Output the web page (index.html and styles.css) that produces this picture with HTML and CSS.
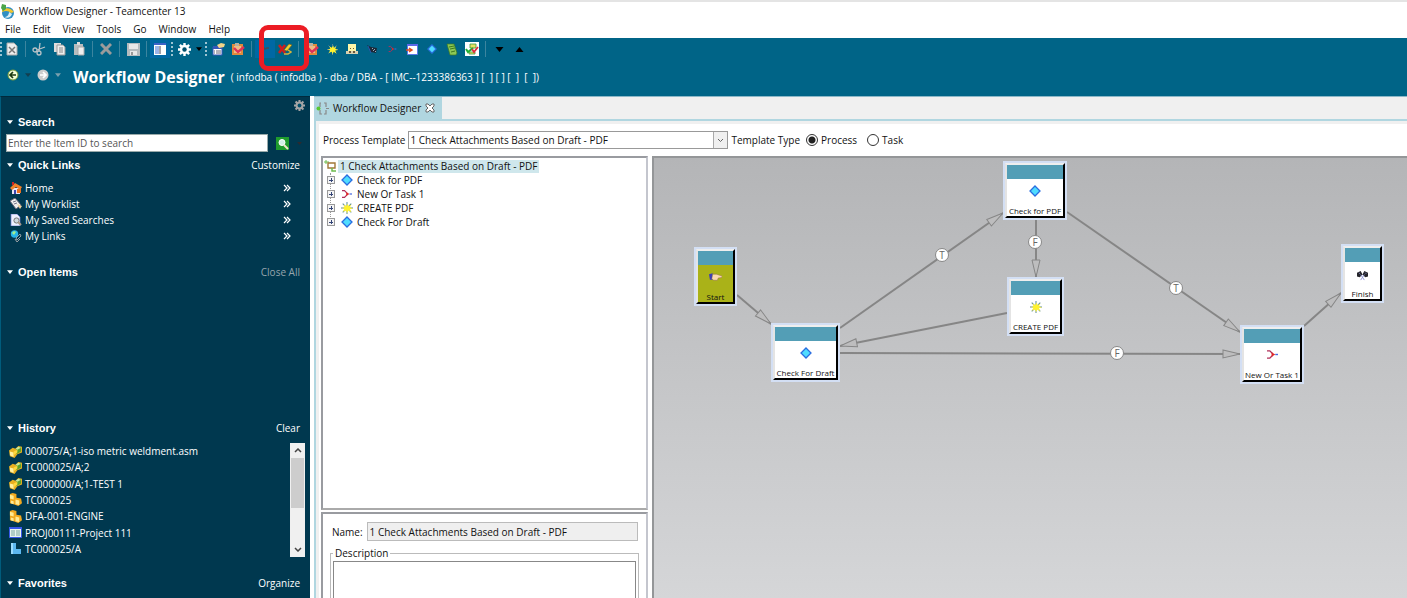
FILE: index.html
```html
<!DOCTYPE html>
<html lang="en">
<head>
  <meta charset="UTF-8" />
  <meta name="viewport" content="width=device-width, initial-scale=1" />
  <title>Workflow Designer - Teamcenter 13</title>
  <link rel="stylesheet" href="styles.css">
</head>
<body>

  <!-- shared icons -->
  <svg class="sprite" aria-hidden="true">
    <symbol id="i-diamond" viewBox="0 0 12 12"><path d="M6 1l5 5-5 5-5-5z" fill="#4fdcff" stroke="#2a6de0" stroke-width="1.3"/></symbol>
    <symbol id="i-or" viewBox="0 0 14 12"><path d="M1 2h3l3 3M1 10h3l3-3" fill="none" stroke="#b0305a" stroke-width="1.5"/><path d="M6 3.5l4 2.5-4 2.5z" fill="#e02828"/><path d="M10 6h3" stroke="#4a6ae0" stroke-width="1.5"/></symbol>
    <symbol id="i-star" viewBox="0 0 14 14"><path d="M7 0v14M0 7h14M2 2l10 10M12 2L2 12" stroke="#5a8a9a" stroke-width="1.200"/><path d="M8 2l.8 3L12 3l-1.500 3.200L14 7.500l-3.500.8L12 12 8.500 10 7 13l-1-3-4 1.500 2-3.300L1 7l3.200-1L3 3l3 1.800z" fill="#fff22e"/></symbol>
    <symbol id="i-caret" viewBox="0 0 8 5"><path d="M0 0h8L4 5z"/></symbol>
    <symbol id="i-gear" viewBox="0 0 14 14"><path d="M7 0v14M0 7h14M2 2l10 10M12 2L2 12" stroke="currentColor" stroke-width="2.600"/><circle cx="7" cy="7" r="5" fill="currentColor"/><circle class="hole" cx="7" cy="7" r="2.400"/></symbol>
    <symbol id="i-part" viewBox="0 0 14 14"><path d="M0 6l4-3 3 1 3-3 4 1v6l-5 2-3 4-5-2z" fill="#e8b020"/><path d="M1 7l4 1v5l-4-2z" fill="#fff0a0"/><path d="M8 4l5-2v5l-5 3z" fill="#5aa02c"/><path d="M5 7l4-2v3l-4 3z" fill="#ffd83c"/><path d="M7 4l3-2 3 1-4 2z" fill="#c8e89a"/></symbol>
    <symbol id="i-item" viewBox="0 0 14 14"><path d="M1 1l3-1 4 1v4l5 1 1 5-4 3-5-2-4-1z" fill="#f2a91e"/><path d="M1 2l4 1v4L1 6zM2 8l3 1v3l-3-1zM7 7l4 1v5l-4-1z" fill="#ffeb94"/></symbol>
    <symbol id="i-clip" viewBox="0 0 14 14"><path d="M1 2h11v11H1z" fill="#e08a3c"/><path d="M3 4h7v7H3z" fill="#f0bc84"/><path d="M4 1h4v3H4z" fill="#b8b0a0"/><path d="M3 6l4 4 6-5" fill="none" stroke="#e0305a" stroke-width="2.400"/></symbol>
    <symbol id="i-flags" viewBox="0 0 14 12"><path d="M1 3l4-2 2 4-3 3-3-1zM13 3L9 1 7 5l3 3 3-1z" fill="#25252b"/><path d="M3 3l1 1M10 3l1 1M5 5l4 6M9 5l-4 6" stroke="#8d95d8"/></symbol>
    <symbol id="i-hand" viewBox="0 0 14 8"><path d="M0 1l4-1v7H1z" fill="#3c3cb8"/><path d="M4 1h4l6 2v1.500l-4 .5-1 2.500H5L3 6z" fill="#fbd9ae" stroke="#8a6648" stroke-width=".5"/></symbol>
  </svg>

  <div class="app">
    <div class="strip"></div>
    <header class="titlebar">
      <svg class="logo" width="15" height="15" viewBox="0 0 15 15"><circle cx="8" cy="9" r="6" fill="#2f8fc4"/><path d="M2 6c4-3 9-2 12 2l-3 1C9 7 6 6 2 8z" fill="#f3c62c"/><path d="M4 13c3 0 5-2 5-5l3 2c-1 3-4 5-8 3z" fill="#d8ecf4"/><path d="M2 0l4 1v4l-3 2-2-3z" fill="#4aa548"/></svg>
      <span>Workflow Designer - Teamcenter 13</span>
    </header>
    <nav class="menubar">
      <button>File</button><button>Edit</button><button>View</button><button>Tools</button><button>Go</button><button>Window</button><button>Help</button>
    </nav>

    <div class="toolbar" role="toolbar">
      <span class="grip"></span>
      <button class="tool" aria-label="Close"><svg width="12" height="14" viewBox="0 0 12 14"><path d="M1 1h7l3 3v9H1z" fill="#eee" stroke="#aaa"/><path d="M3 5l6 6M9 5l-6 6" stroke="#777" stroke-width="1.500"/></svg></button>
      <span class="sep"></span>
      <button class="tool" aria-label="Cut"><svg width="14" height="14" viewBox="0 0 14 14" fill="none" stroke="#b9c3c8" stroke-width="1.300"><path d="M8 1L7 9M13 5L5 8"/><circle cx="3" cy="8" r="2"/><circle cx="7" cy="11" r="2"/></svg></button>
      <button class="tool" aria-label="Copy"><svg width="13" height="14" viewBox="0 0 13 14"><path d="M1 1h7v9H1z" fill="#ddd"/><path d="M4 3h6l2 2v8H4z" fill="#eee" stroke="#999"/><path d="M6 6h4M6 8h4M6 10h4" stroke="#888"/></svg></button>
      <button class="tool" aria-label="Paste"><svg width="13" height="14" viewBox="0 0 13 14"><path d="M1 2h9v11H1z" fill="#b8bcbe"/><path d="M4 0h3v3H4z" fill="#ddd"/><path d="M5 5h6v8H5z" fill="#eee" stroke="#aaa"/></svg></button>
      <span class="sep"></span>
      <button class="tool" aria-label="Delete"><svg width="12" height="12" viewBox="0 0 12 12"><path d="M1 1l10 10M11 1L1 11" stroke="#9b9b9b" stroke-width="3"/></svg></button>
      <span class="sep"></span>
      <button class="tool" aria-label="Save"><svg width="13" height="13" viewBox="0 0 13 13"><path d="M0 0h13v13H0z" fill="#b5bbbe"/><path d="M2 1h9v5H2zM3 8h7v4H3z" fill="#e8e8e8"/><path d="M4 9h2v3H4z" fill="#999"/></svg></button>
      <span class="sep"></span>
      <button class="tool active" aria-label="Navigation pane"><svg width="12" height="12" viewBox="0 0 12 12"><path d="M0 0h12v12H0z" fill="#fff"/><path d="M0 0h12v2H0z" fill="#3c62c8"/><path d="M1 3h4v8H1z" fill="#9db4e8"/><path d="M6 3v8" stroke="#445"/></svg></button>
      <span class="grip"></span>
      <button class="tool white" aria-label="Options"><svg width="13" height="13"><use href="#i-gear"/></svg></button>
      <button class="drop" aria-label="More options"><svg width="6" height="4"><use href="#i-caret"/></svg></button>
      <span class="grip"></span>
      <button class="tool" aria-label="Properties"><svg width="13" height="14" viewBox="0 0 13 14"><path d="M1 5h9v8H1z" fill="#fff" stroke="#3757b8"/><path d="M1 4h9v3H1z" fill="#3757b8"/><path d="M2 9h1M4 9h5M2 11h1M4 11h5" stroke="#667"/><path d="M5 3l4-2 4 1-1 3-5 1z" fill="#f4d488"/></svg></button>
      <button class="tool" aria-label="Assign"><svg width="14" height="14"><use href="#i-clip"/></svg></button>
      <span class="sep"></span>
      <button class="tool active" aria-label="Browse mode"><svg width="10" height="6" viewBox="0 0 10 6"><path d="M1 2h3l1 1 2-1h2M3 4h1" fill="none" stroke="#3d4c5c" stroke-width="1.500"/></svg></button>
      <button class="tool" aria-label="Edit mode"><svg width="14" height="12" viewBox="0 0 14 12"><path d="M1 2l6 8M7 2l-6 8" stroke="#d01c1c" stroke-width="2.500"/><path d="M6 7l5-6 3 1-5 6z" fill="#f0d030" stroke="#7c5a18" stroke-width=".6"/><path d="M6 11h4l3-2-3-2" fill="none" stroke="#d9b53a" stroke-width="1.500"/></svg></button>
      <span class="sep"></span>
      <button class="tool" aria-label="Do task"><svg width="14" height="14"><use href="#i-clip"/></svg></button>
      <button class="tool" aria-label="Generic task"><svg width="11" height="11"><use href="#i-star"/></svg></button>
      <button class="tool" aria-label="Review task"><svg width="12" height="12" viewBox="0 0 12 12"><path d="M2 1h8v7H2z" fill="#fff6a8"/><path d="M0 8h12v3H0z" fill="#d8d0b0"/><path d="M4 5h1v1H4zM7 5h1v1H7zM3 8h2v2H3zM7 8h2v2H7z" fill="#6a5a3a"/></svg></button>
      <button class="tool" aria-label="Route task"><svg width="10" height="9" viewBox="0 0 10 9"><path d="M0 0l4 2 6 1-1 5-5-1z" fill="#1d2836"/><path d="M5 3h1v1H5zM7 4h1v1H7zM6 5h1v1H6zM8 6h1v1H8z" fill="#9ab"/><path d="M1 1l3 7" stroke="#2a55b0"/></svg></button>
      <button class="tool" aria-label="Or task"><svg width="9" height="8"><use href="#i-or"/></svg></button>
      <button class="tool" aria-label="Acknowledge task"><svg width="12" height="11" viewBox="0 0 12 11"><path d="M1.500.5h10v10h-10z" fill="#fff" stroke="#5c78e8"/><path d="M1 0h11v2H1z" fill="#5c68e8"/><path d="M0 6h5M3 4l3 2-3 2" stroke="#d84a20" fill="none" stroke-width="1.500"/></svg></button>
      <button class="tool" aria-label="Condition task"><svg width="10" height="10"><use href="#i-diamond"/></svg></button>
      <button class="tool" aria-label="Checklist"><svg width="12" height="13" viewBox="0 0 12 13"><path d="M1 1l7 0 3 9-1 2-6 0z" fill="#8cc856" stroke="#3f7a1e" stroke-width=".7"/><path d="M3 4l5-1M4 6l5-1M5 9l4-1" stroke="#3f7a1e"/></svg></button>
      <button class="tool" aria-label="Validate task"><svg width="14" height="14" viewBox="0 0 14 14"><path d="M0 0h14v14H0z" fill="#fff"/><path d="M5 2h6v4H5zM4 10h6v2H4z" fill="#e8e060" stroke="#3a9a42" stroke-width=".8"/><path d="M1 7l2 3 5-4" fill="none" stroke="#22b034" stroke-width="2"/><path d="M7 7l2 3 4-5" fill="none" stroke="#e02c3c" stroke-width="1.800"/></svg></button>
      <span class="sep"></span>
      <button class="tool" aria-label="Move down"><svg width="9" height="5"><use href="#i-caret"/></svg></button>
      <button class="tool flip" aria-label="Move up"><svg width="9" height="5"><use href="#i-caret"/></svg></button>
    </div>

    <div class="banner">
      <button class="nav-btn" aria-label="Back"><svg width="12" height="12" viewBox="0 0 12 12"><circle cx="6" cy="6" r="5" fill="#f4ffd8" stroke="#7a9a3a"/><path d="M9 6H4M6 3L3 6l3 3" fill="none" stroke="#1d3a10" stroke-width="1.700"/></svg></button>
      <svg class="dim" width="6" height="4"><use href="#i-caret"/></svg>
      <button class="nav-btn" aria-label="Forward"><svg width="12" height="12" viewBox="0 0 12 12"><circle cx="6" cy="6" r="5.500" fill="#ccc"/><path d="M3 6h5M6 3l3 3-3 3" fill="none" stroke="#fff" stroke-width="1.700"/></svg></button>
      <svg class="dim light" width="6" height="4"><use href="#i-caret"/></svg>
      <h1>Workflow Designer</h1>
      <span class="session">( infodba ( infodba ) - dba / DBA - [ IMC--1233386363 ] [&nbsp; ] [ ] [&nbsp; ]&nbsp; [&nbsp; ])</span>
    </div>

    <div class="workspace">
      <aside class="sidebar">
        <div class="side-top"><button aria-label="Panel settings"><svg width="11" height="11"><use href="#i-gear"/></svg></button></div>

        <section class="search">
          <h2><svg width="6" height="4"><use href="#i-caret"/></svg>Search</h2>
          <div class="search-row">
            <input type="text" placeholder="Enter the Item ID to search" aria-label="Search">
            <button aria-label="Run search"><svg width="13" height="13" viewBox="0 0 13 13"><path d="M0 0h13v13H0z" fill="#1f9c2d"/><circle cx="6" cy="5.500" r="3" fill="#d2f0e6" stroke="#fff"/><path d="M8 8l4 4" stroke="#f2e6c8" stroke-width="2"/></svg></button>
            <svg class="search-caret" width="5" height="3"><use href="#i-caret"/></svg>
          </div>
        </section>

        <section class="quick">
          <h2><svg width="6" height="4"><use href="#i-caret"/></svg>Quick Links <a href="#">Customize</a></h2>
          <ul>
            <li><svg width="12" height="12" viewBox="0 0 12 12"><path d="M2 6h8v6H2z" fill="#e8e4f4"/><path d="M0 6l5-5 7 4-2 3-4-3-4 3z" fill="#f0802a"/><path d="M2 0h2v3H2z" fill="#c22"/><path d="M4 8h2v4H4z" fill="#3a46b0"/><path d="M7 7h4v4H7z" fill="#e87020"/></svg><a href="#">Home</a><svg class="more" width="8" height="8"><use href="#i-more"/></svg></li>
            <li><svg width="12" height="12" viewBox="0 0 12 12"><path d="M0 3l5-3 6 7-5 4z" fill="#eee" stroke="#667"/><path d="M3 4l3-1M4 6l3-1" stroke="#778"/><path d="M7 6l5 2-2 3z" fill="#f2d2a0"/></svg><a href="#">My Worklist</a><svg class="more" width="8" height="8"><use href="#i-more"/></svg></li>
            <li><svg width="12" height="12" viewBox="0 0 12 12"><path d="M1 0h6l3 3v9H1z" fill="#eef0ff" stroke="#6a78d0" stroke-width=".7"/><circle cx="6.500" cy="6.500" r="2.600" fill="#cfd8e0" stroke="#777"/><path d="M8 8l3 3" stroke="#a98" stroke-width="2"/></svg><a href="#">My Saved Searches</a><svg class="more" width="8" height="8"><use href="#i-more"/></svg></li>
            <li><svg width="12" height="12" viewBox="0 0 12 12"><circle cx="4.500" cy="4" r="3.700" fill="#27b5e8"/><path d="M2 3c1-2 3-2 4-1L4 5z" fill="#a5f08c"/><path d="M6 8l4-4 1 2-4 4zM5 9l2 3 3-3" fill="none" stroke="#98a0a4"/></svg><a href="#">My Links</a><svg class="more" width="8" height="8"><use href="#i-more"/></svg></li>
          </ul>
          <svg class="sprite"><symbol id="i-more" viewBox="0 0 8 8"><path d="M1 1l3 3-3 3M4 1l3 3-3 3" fill="none" stroke="#fff" stroke-width="1.200"/></symbol></svg>
        </section>

        <section class="open-items">
          <h2><svg width="6" height="4"><use href="#i-caret"/></svg>Open Items <a class="off" href="#">Close All</a></h2>
        </section>

        <section class="history">
          <h2><svg width="6" height="4"><use href="#i-caret"/></svg>History <a href="#">Clear</a></h2>
          <div class="history-list">
            <ul>
              <li><svg width="13" height="13"><use href="#i-part"/></svg><a href="#">000075/A;1-iso metric weldment.asm</a></li>
              <li><svg width="13" height="13"><use href="#i-part"/></svg><a href="#">TC000025/A;2</a></li>
              <li><svg width="13" height="13"><use href="#i-part"/></svg><a href="#">TC000000/A;1-TEST 1</a></li>
              <li><svg width="13" height="13"><use href="#i-item"/></svg><a href="#">TC000025</a></li>
              <li><svg width="13" height="13"><use href="#i-item"/></svg><a href="#">DFA-001-ENGINE</a></li>
              <li><svg width="13" height="13" viewBox="0 0 13 13"><path d="M.5 1.500h12v10H.5z" fill="#e8f4ee" stroke="#3858e8"/><path d="M0 1h13v2H0z" fill="#3858e8"/><path d="M2 5h4M7 5h4M2 7h4M7 7h4M2 9h4M7 9h4" stroke="#7ca8a0"/></svg><a href="#">PROJ00111-Project 111</a></li>
              <li><svg width="13" height="13" viewBox="0 0 13 13"><path d="M2 1h5v6h5v5H2z" fill="#5cb8f0"/><path d="M2 1h2v11H2z" fill="#9adcff"/></svg><a href="#">TC000025/A</a></li>
            </ul>
            <div class="scrollbar">
              <button aria-label="Scroll up"><svg width="8" height="5" viewBox="0 0 8 5"><path d="M1 4l3-3 3 3" fill="none" stroke="#444" stroke-width="1.500"/></svg></button>
              <div class="thumb"></div>
              <button aria-label="Scroll down"><svg width="8" height="5" viewBox="0 0 8 5"><path d="M1 1l3 3 3-3" fill="none" stroke="#444" stroke-width="1.500"/></svg></button>
            </div>
          </div>
        </section>

        <section class="favorites">
          <h2><svg width="6" height="4"><use href="#i-caret"/></svg>Favorites <a href="#">Organize</a></h2>
        </section>
      </aside>

      <main class="view">
        <div class="tabs">
          <div class="tab">
            <svg width="13" height="13" viewBox="0 0 13 13"><path d="M5 1H4v4M4 8v4h2M8 1h2v4M10 8v4H8M10 6.500h3" fill="none" stroke="#888" stroke-width="1.200"/><circle cx="2.500" cy="6.500" r="2" fill="#58c832"/></svg>
            <span>Workflow Designer</span>
            <button aria-label="Close tab"><svg width="10" height="10" viewBox="0 0 10 10"><path d="M1 1h2l2 2 2-2h2v2L7 5l2 2v2H7L5 7 3 9H1V7l2-2-2-2z" fill="#fff" stroke="#666"/></svg></button>
          </div>
        </div>

        <div class="panel">
          <form class="template-row">
            <label for="template">Process Template</label>
            <span class="combo">
              <select id="template"><option>1 Check Attachments Based on Draft - PDF</option></select>
              <svg width="7" height="5" viewBox="0 0 7 5"><path d="M1 1l2.500 2.500L6 1" fill="none" stroke="#666"/></svg>
            </span>
            <span class="type-label">Template Type</span>
            <label class="radio"><input type="radio" name="type" checked>Process</label>
            <label class="radio"><input type="radio" name="type">Task</label>
          </form>

          <div class="split">
            <div class="left">
              <div class="tree">
                <div class="root">
                  <svg width="14" height="13" viewBox="0 0 14 13" fill="none"><path d="M1 2h5M3 0v4" stroke="#6cbc4c"/><path d="M5 3h7v5H5z" stroke="#a07838" stroke-width="1.400"/><path d="M9 8v3h4" stroke="#6cbc4c" stroke-width="1.500"/></svg>
                  <span class="selected">1 Check Attachments Based on Draft - PDF</span>
                </div>
                <ul>
                  <li><button class="expand" aria-label="Expand"></button><svg width="12" height="12"><use href="#i-diamond"/></svg>Check for PDF</li>
                  <li><button class="expand" aria-label="Expand"></button><svg width="12" height="10"><use href="#i-or"/></svg>New Or Task 1</li>
                  <li><button class="expand" aria-label="Expand"></button><svg width="12" height="12"><use href="#i-star"/></svg>CREATE PDF</li>
                  <li><button class="expand" aria-label="Expand"></button><svg width="12" height="12"><use href="#i-diamond"/></svg>Check For Draft</li>
                </ul>
              </div>
              <div class="details">
                <div class="name-row">
                  <label for="name">Name:</label>
                  <input id="name" type="text" readonly value="1 Check Attachments Based on Draft - PDF">
                </div>
                <fieldset>
                  <legend>Description</legend>
                  <textarea aria-label="Description"></textarea>
                </fieldset>
              </div>
            </div>

            <div class="canvas">
              <svg class="links">
                <defs>
                  <marker id="arrow" markerWidth="20" markerHeight="12" refX="18" refY="5" orient="auto" markerUnits="userSpaceOnUse">
                    <path d="M1 1l17 4-17 4z" fill="#bdbdbe" stroke="#868686"/>
                  </marker>
                </defs>
                <path d="M83 137L117 166"/>
                <path d="M186 170L349 55"/>
                <path d="M382 62V119"/>
                <path d="M353 155L186 188"/>
                <path d="M186 195L586 196"/>
                <path d="M413 54L586 174"/>
                <path d="M650 168L687 135"/>
              </svg>
              <span class="badge b1">T</span>
              <span class="badge b2">F</span>
              <span class="badge b3">T</span>
              <span class="badge b4">F</span>

              <div class="node start"><div class="task"><svg width="13" height="8"><use href="#i-hand"/></svg><span>Start</span></div></div>
              <div class="node check-draft"><div class="task"><svg width="12" height="12"><use href="#i-diamond"/></svg><span>Check For Draft</span></div></div>
              <div class="node check-pdf"><div class="task"><svg width="12" height="12"><use href="#i-diamond"/></svg><span>Check for PDF</span></div></div>
              <div class="node create-pdf"><div class="task"><svg width="12" height="12"><use href="#i-star"/></svg><span>CREATE PDF</span></div></div>
              <div class="node or-task"><div class="task"><svg width="13" height="11"><use href="#i-or"/></svg><span>New Or Task 1</span></div></div>
              <div class="node finish"><div class="task"><svg width="13" height="11"><use href="#i-flags"/></svg><span>Finish</span></div></div>
            </div>
          </div>
        </div>
      </main>
    </div>
    <div class="highlight"></div>
  </div>

</body>
</html>
```
FILE: styles.css
```css
* {
  box-sizing: border-box;
}
body {
  margin: 0;
  background: #fff;
  color: #111;
  font-family: "Open Sans", sans-serif;
  font-size: 10px;
}
button, input, select, textarea {
  font: inherit;
  color: inherit;
}
button {
  background: transparent;
  border: none;
  padding: 0;
  display: flex;
  align-items: center;
  justify-content: center;
}
a {
  color: inherit;
  text-decoration: none;
}
ul {
  list-style: none;
  margin: 0;
  padding: 0;
}
svg {
  flex: none;
}
.sprite {
  position: absolute;
  width: 0;
  height: 0;
}
.app {
  position: relative;
  display: flex;
  flex-direction: column;
  height: 100vh;
  overflow: hidden;
}
.strip {
  height: 2px;
  background: #e4e4e4;
  flex: none;
}
.titlebar {
  display: flex;
  align-items: center;
  gap: 4px;
  height: 18px;
  flex: none;
}
.menubar {
  display: flex;
  gap: 12px;
  height: 18px;
  padding-left: 5px;
  flex: none;
}

/* toolbar */
.toolbar {
  display: flex;
  align-items: center;
  height: 22px;
  background: #006487;
  flex: none;
}
.tool {
  width: 20px;
  height: 18px;
}
.tool.active {
  background: #0068a4;
}
.tool.white {
  color: #fff;
}
.tool.flip svg {
  transform: rotate(180deg);
}
.hole {
  fill: #00506c;
}
.drop {
  width: 10px;
}
.grip {
  width: 2px;
  height: 14px;
  border-left: 2px dotted #9cc4d2;
}
.grip:not(:first-child) {
  margin: 0 1px;
}
.sep {
  width: 1px;
  height: 16px;
  margin: 0 3px;
  background: #3c859f;
}
.banner {
  display: flex;
  align-items: center;
  height: 36px;
  padding: 0 0 2px 7px;
  background: #006487;
  color: #fff;
  flex: none;
}
.nav-btn {
  padding-bottom: 5px;
}
.banner .dim {
  margin: 0 6px 4px;
  fill: #123f50;
}
.banner .dim.light {
  margin-right: 12px;
  fill: #7aa0ae;
}
h1 {
  margin: 0 6px 0 0;
  font-size: 16px;
}

/* sidebar */
.workspace {
  display: flex;
  flex: 1;
  min-height: 0;
}
.sidebar {
  width: 310px;
  flex: none;
  background: #00384f;
  border-left: 1px solid #005c7c;
  border-top: 1px solid #002a3d;
  color: #fff;
  padding: 0 5px;
}
.side-top {
  display: flex;
  justify-content: flex-end;
  height: 16px;
  padding-right: 1px;
  margin-right: -1px;
  color: #a5a5a5;
}
h2 {
  display: flex;
  align-items: center;
  gap: 5px;
  height: 18px;
  margin: 0;
  padding: 0 5px 0 1px;
  font: bold 11px "Liberation Sans", sans-serif;
}
h2 svg {
  fill: #fff;
}
h2 a {
  margin-left: auto;
  font: 10px "Open Sans", sans-serif;
}
h2 a.off {
  color: #97a5ad;
}
.search-row {
  display: flex;
  align-items: center;
  gap: 8px;
  margin: 3px 0 4px;
}
.search-row input {
  width: 262px;
  height: 18px;
  border: 1px solid #9aa;
  padding: 0 1px;
  background: #fff;
}
.search-row input::placeholder {
  color: #555;
}
.search-caret {
  fill: #2a2a30;
}
.quick {
  height: 107px;
}
.quick ul {
  padding: 6px 14px 0 4px;
}
.sidebar li {
  display: flex;
  align-items: center;
  gap: 3px;
  height: 16px;
}
.sidebar .more {
  margin-left: auto;
}
.open-items {
  height: 156px;
}
.history-list {
  display: flex;
  justify-content: space-between;
  margin-top: 6px;
}
.history ul {
  display: flex;
  flex-direction: column;
  justify-content: space-between;
  padding-left: 3px;
}
.scrollbar {
  display: flex;
  flex-direction: column;
  width: 15px;
  height: 114px;
  background: #f0f0f0;
}
.scrollbar button {
  height: 15px;
}
.scrollbar .thumb {
  height: 50px;
  margin: 0 1px auto;
  background: #cdcdcd;
}
.favorites {
  margin-top: 17px;
}

/* editor view */
.view {
  display: flex;
  flex-direction: column;
  flex: 1;
  min-width: 0;
  margin-left: 4px;
}
.tabs {
  display: flex;
  height: 25px;
  background: #f0f0f0;
  border-top: 1px solid #8cb8c8;
  border-bottom: 2px solid #b0d6e0;
  flex: none;
}
.tab {
  display: flex;
  align-items: center;
  gap: 4px;
  width: 128px;
  padding-left: 2px;
  background: #b0d6e0;
}
.panel {
  display: flex;
  flex-direction: column;
  flex: 1;
  min-height: 0;
  border-left: 2px solid #b0d6e0;
  padding: 3px 0 0 3px;
  background: linear-gradient(#fff, #fff) 3px 3px no-repeat #f0f0f0;
}
.template-row {
  display: flex;
  align-items: center;
  height: 32px;
  padding-left: 4px;
}
.combo {
  position: relative;
  width: 320px;
  margin: 0 3px;
}
.combo select {
  display: block;
  width: 100%;
  height: 18px;
  appearance: none;
  border: 1px solid #999;
  border-radius: 0;
  padding: 0 1px;
  background: linear-gradient(90deg, #aaa 1px, #f0f0f0 1px) right / 14px 100% no-repeat #fff;
}
.combo svg {
  position: absolute;
  right: 4px;
  top: 7px;
  pointer-events: none;
}
.type-label {
  margin-right: 6px;
}
.radio {
  display: flex;
  align-items: center;
  gap: 3px;
  margin-right: 10px;
}
.radio input {
  appearance: none;
  width: 12px;
  height: 12px;
  margin: 0;
  border: 1px solid #333;
  border-radius: 50%;
}
.radio input:checked {
  background: radial-gradient(circle, #222 3px, #fff 4px);
}
.split {
  display: flex;
  gap: 4px;
  flex: 1;
  min-height: 0;
}
.left {
  display: flex;
  flex-direction: column;
  gap: 2px;
  width: 329px;
  padding-left: 2px;
}
.tree {
  height: 354px;
  border: 2px solid #999ba0;
  border-color: #999ba0 #c4c6ce #aaa #999ba0;
  padding-top: 1px;
  flex: none;
}
.root {
  display: flex;
  align-items: center;
  gap: 1px;
  height: 14px;
}
.selected {
  padding: 0 2px;
  line-height: 13px;
  background: #cfe7ec;
}
.tree ul {
  margin-left: 7px;
  border-left: 1px dotted #999;
  height: 50px;
}
.tree li {
  display: flex;
  align-items: center;
  height: 14px;
  gap: 4px;
}
.expand {
  width: 8px;
  height: 8px;
  margin-left: -4px;
  margin-right: 2px;
  border: 1px solid #999;
  background:
    linear-gradient(#347, #347) center / 4px 1px no-repeat,
    linear-gradient(#347, #347) center / 1px 4px no-repeat,
    #f4f4f4;
}
.details {
  flex: 1;
  min-height: 0;
  overflow: hidden;
  border: 2px solid #999ba0;
  border-right-color: #c4c6ce;
  border-bottom: none;
  padding: 8px 7px 0;
}
.name-row {
  display: flex;
  align-items: center;
  gap: 4px;
  padding: 0 1px 0 2px;
}
.name-row input {
  flex: 1;
  height: 19px;
  border: 1px solid #bbb;
  padding: 0 2px;
  background: #efefef;
}
fieldset {
  margin: 6px 0 0;
  border: 1px solid #bbb;
  padding: 1px 2px;
}
legend {
  padding: 0 2px;
  line-height: 13px;
}
textarea {
  display: block;
  width: 100%;
  height: 60px;
  border: 1px solid #888;
  resize: none;
}

/* workflow diagram */
.canvas {
  position: relative;
  flex: 1;
  min-width: 0;
  overflow: hidden;
  border-left: 2px solid #949698;
  border-top: 2px solid #949698;
  background: linear-gradient(#b4b5b7, #d5d6d8);
}
.links {
  display: block;
  width: 100%;
  height: 100%;
}
.links > path {
  fill: none;
  stroke: #868686;
  stroke-width: 2;
  marker-end: url(#arrow);
}
.node {
  position: absolute;
  height: 59px;
  border: 2px solid #d3dff4;
  background: #fff;
}
.task {
  display: flex;
  flex-direction: column;
  align-items: center;
  justify-content: space-between;
  height: 100%;
  border: 2px solid #000;
  border-left: 2px solid #e4e4e4;
  border-top: 2px solid #eee;
  padding-top: 20px;
  background: linear-gradient(#539eb6, #539eb6) top / 100% 14px no-repeat;
  font-size: 8px;
  line-height: 10px;
  white-space: nowrap;
}
.start .task,
.finish .task {
  padding-top: 22px;
}
.start .task {
  background-color: #aab218;
}
.start { left: 40px; top: 89px; width: 43px; }
.check-draft { left: 117px; top: 165px; width: 69px; }
.check-pdf { left: 349px; top: 3px; width: 64px; }
.create-pdf { left: 353px; top: 119px; width: 57px; }
.or-task { left: 586px; top: 167px; width: 64px; }
.finish { left: 687px; top: 86px; width: 43px; }
.badge {
  position: absolute;
  width: 14px;
  height: 14px;
  border: 1px solid #888;
  border-radius: 50%;
  background: #fff;
  color: #666;
  line-height: 12px;
  text-align: center;
}
.b1 { left: 281px; top: 90px; }
.b2 { left: 374px; top: 77px; }
.b3 { left: 515px; top: 123px; }
.b4 { left: 456px; top: 188px; }

/* marker box around the mode buttons */
.highlight {
  position: absolute;
  left: 259px;
  top: 25px;
  width: 50px;
  height: 46px;
  border: 5px solid #ec1c24;
  border-radius: 9px;
  pointer-events: none;
}
```
